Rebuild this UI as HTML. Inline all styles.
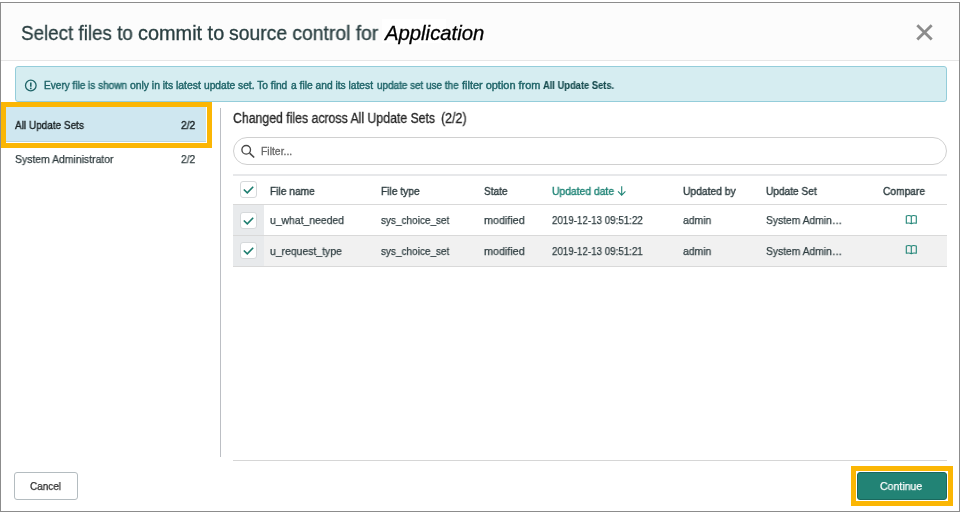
<!DOCTYPE html>
<html lang="en">
<head>
<meta charset="utf-8">
<title>Select files to commit to source control</title>
<style>
html,body{margin:0;padding:0;}
body{width:960px;height:512px;position:relative;overflow:hidden;background:#fff;font-family:"Liberation Sans",sans-serif;}
.a{position:absolute;box-sizing:border-box;}
.t{will-change:transform;position:absolute;white-space:nowrap;line-height:20px;height:20px;transform-origin:0 0;font-family:"Liberation Sans",sans-serif;}
svg{position:absolute;overflow:visible;}
</style>
</head>
<body>
<!-- outer frame -->
<div class="a" style="left:0;top:2px;width:960px;height:510px;border:1px solid #8c8c8c;"></div>
<!-- header -->
<div class="a" style="left:1px;top:3px;width:958px;height:58px;background:#fcfcfc;border-bottom:1px solid #e6e6e6;"></div>
<div class="a" style="left:382px;top:19px;width:64px;height:24px;background:#fff;"></div>
<!-- close X -->
<svg style="left:916px;top:24px" width="17" height="17" viewBox="0 0 17 17"><path d="M1.3 1.2 L15.7 15.6 M15.7 1.2 L1.3 15.6" stroke="#8c8c8c" stroke-width="2.8" fill="none"/></svg>
<!-- banner -->
<div class="a" style="left:15px;top:66px;width:932px;height:36px;background:#d6edf1;border:1px solid #94cdda;border-radius:3px;"></div>
<svg style="left:24px;top:79px" width="14" height="14" viewBox="0 0 14 14"><circle cx="6.8" cy="6.5" r="5.3" fill="none" stroke="#1f6468" stroke-width="1.3"/><path d="M6.8 3.5 V7.7" stroke="#1f6468" stroke-width="1.6" fill="none"/><circle cx="6.8" cy="9.4" r="0.9" fill="#1f6468"/></svg>
<!-- sidebar selected + orange highlight -->
<div class="a" style="left:1px;top:102px;width:211px;height:46px;border:5px solid #fbb604;background:#fff;"></div>
<div class="a" style="left:6px;top:107px;width:200px;height:35px;background:#cfe7f0;border-bottom:1px solid #b9d3dc;"></div>
<!-- vertical divider -->
<div class="a" style="left:220px;top:108px;width:1px;height:349px;background:#bcbfc4;"></div>
<!-- filter -->
<div class="a" style="left:233px;top:137px;width:714px;height:28px;border:1px solid #d0d0d0;border-radius:14px;background:#fff;"></div>
<svg style="left:240px;top:144px" width="16" height="16" viewBox="0 0 16 16"><circle cx="6.2" cy="5.8" r="4.3" fill="none" stroke="#484848" stroke-width="1.35"/><path d="M9.6 9.1 L14.2 13.5" stroke="#484848" stroke-width="1.6" fill="none"/></svg>
<!-- table -->
<div class="a" style="left:233px;top:174px;width:714px;height:2px;background:#e7e8ea;"></div>
<div class="a" style="left:233px;top:204px;width:714px;height:1px;background:#d9d9d9;"></div>
<div class="a" style="left:233px;top:205px;width:31px;height:30px;background:#e8eaec;"></div>
<div class="a" style="left:233px;top:235px;width:714px;height:1px;background:#d9d9d9;"></div>
<div class="a" style="left:233px;top:236px;width:714px;height:30px;background:#f1f1f1;"></div>
<div class="a" style="left:233px;top:236px;width:31px;height:30px;background:#e8eaec;"></div>
<div class="a" style="left:233px;top:265.5px;width:714px;height:1px;background:#d9d9d9;"></div>
<!-- checkboxes -->
<div class="a cb" style="left:240px;top:181px;width:17px;height:17px;background:#fff;border:1px solid #d6d9db;border-radius:3px;"></div>
<div class="a cb" style="left:240px;top:212px;width:17px;height:17px;background:#fff;border:1px solid #d6d9db;border-radius:3px;"></div>
<div class="a cb" style="left:240px;top:242px;width:17px;height:17px;background:#fff;border:1px solid #d6d9db;border-radius:3px;"></div>
<svg style="left:240px;top:181px" width="17" height="17" viewBox="0 0 17 17"><path d="M3.8 8.5 L7.3 11.9 L13.2 5.8" stroke="#1c7d6f" stroke-width="1.6" fill="none"/></svg>
<svg style="left:240px;top:212px" width="17" height="17" viewBox="0 0 17 17"><path d="M3.8 8.5 L7.3 11.9 L13.2 5.8" stroke="#1c7d6f" stroke-width="1.6" fill="none"/></svg>
<svg style="left:240px;top:242px" width="17" height="17" viewBox="0 0 17 17"><path d="M3.8 8.5 L7.3 11.9 L13.2 5.8" stroke="#1c7d6f" stroke-width="1.6" fill="none"/></svg>
<!-- sort arrow -->
<svg style="left:617px;top:186px" width="10" height="10" viewBox="0 0 10 10"><path d="M4.7 0.3 V9 M1 5.4 L4.7 9.1 L8.4 5.4" stroke="#218577" stroke-width="1.1" fill="none"/></svg>
<!-- book icons -->
<svg style="left:905px;top:214px" width="13" height="11" viewBox="0 0 13 11"><path d="M6.3 2.3 C5.3 1.5 2.6 1.5 1.3 2 V9.3 C2.8 9 5 9 6.3 9.7 C7.6 9 9.8 9 11.3 9.3 V2 C10 1.5 7.3 1.5 6.3 2.3 Z M6.3 2.3 V9.7" stroke="#218577" stroke-width="1.1" fill="none" stroke-linejoin="round"/></svg>
<svg style="left:905px;top:244px" width="13" height="11" viewBox="0 0 13 11"><path d="M6.3 2.3 C5.3 1.5 2.6 1.5 1.3 2 V9.3 C2.8 9 5 9 6.3 9.7 C7.6 9 9.8 9 11.3 9.3 V2 C10 1.5 7.3 1.5 6.3 2.3 Z M6.3 2.3 V9.7" stroke="#218577" stroke-width="1.1" fill="none" stroke-linejoin="round"/></svg>
<!-- footer line -->
<div class="a" style="left:233px;top:460px;width:714px;height:1px;background:#d6d6d6;"></div>
<!-- cancel -->
<div class="a" style="left:14px;top:472px;width:64px;height:28px;border:1px solid #b4bcc0;border-radius:3px;background:#fff;"></div>
<!-- continue -->
<div class="a" style="left:851px;top:466px;width:102px;height:40px;border:5px solid #fbb604;background:#fff;"></div>
<div class="a" style="left:857px;top:472px;width:90px;height:28px;border:1px solid #1a685d;border-radius:3px;background:#228375;"></div>
<span class="t" style="left:20.60px;top:22.78px;font-size:19.4px;color:#293e40;font-weight:400;font-style:normal;-webkit-text-stroke:0.3px #293e40;transform:scaleX(0.9694)">Select files to</span>
<span class="t" style="left:137.50px;top:22.78px;font-size:19.4px;color:#293e40;font-weight:400;font-style:normal;-webkit-text-stroke:0.3px #293e40;transform:scaleX(1.0256)">commit to</span>
<span class="t" style="left:229.20px;top:22.78px;font-size:19.4px;color:#293e40;font-weight:400;font-style:normal;-webkit-text-stroke:0.3px #293e40;transform:scaleX(0.9966)">source control for</span>
<span class="t" style="left:385.40px;top:22.64px;font-size:19.8px;color:#000;font-weight:400;font-style:italic;-webkit-text-stroke:0.3px #000;transform:scaleX(1.0260)">Application</span>
<span class="t" style="left:43.70px;top:76.00px;font-size:10.1px;color:#1f6468;font-weight:400;font-style:normal;-webkit-text-stroke:0.4px #1f6468;transform:scaleX(0.9929)">Every file is shown</span>
<span class="t" style="left:130.00px;top:76.00px;font-size:10.1px;color:#1f6468;font-weight:400;font-style:normal;-webkit-text-stroke:0.4px #1f6468;transform:scaleX(1.0259)">only in its latest</span>
<span class="t" style="left:204.20px;top:76.00px;font-size:10.1px;color:#1f6468;font-weight:400;font-style:normal;-webkit-text-stroke:0.4px #1f6468;transform:scaleX(1.0120)">update set. To find</span>
<span class="t" style="left:291.30px;top:76.00px;font-size:10.1px;color:#1f6468;font-weight:400;font-style:normal;-webkit-text-stroke:0.4px #1f6468;transform:scaleX(1.0149)">a file and its latest</span>
<span class="t" style="left:376.70px;top:76.00px;font-size:10.1px;color:#1f6468;font-weight:400;font-style:normal;-webkit-text-stroke:0.4px #1f6468;transform:scaleX(0.9824)">update set use the</span>
<span class="t" style="left:461.60px;top:76.00px;font-size:10.1px;color:#1f6468;font-weight:400;font-style:normal;-webkit-text-stroke:0.4px #1f6468;transform:scaleX(1.0832)">filter option from</span>
<span class="t" style="left:543.30px;top:76.00px;font-size:10.1px;color:#154a4d;font-weight:700;font-style:normal;-webkit-text-stroke:0.1px #154a4d;transform:scaleX(0.9253)">All Update Sets.</span>
<span class="t" style="left:15.40px;top:114.85px;font-size:11.1px;color:#1a2224;font-weight:400;font-style:normal;-webkit-text-stroke:0.4px #1a2224;transform:scaleX(0.9010)">All Update Sets</span>
<span class="t" style="left:181.00px;top:114.85px;font-size:11.1px;color:#1a2224;font-weight:400;font-style:normal;-webkit-text-stroke:0.4px #1a2224;transform:scaleX(0.9208)">2/2</span>
<span class="t" style="left:15.40px;top:149.15px;font-size:11.1px;color:#2e3b3e;font-weight:400;font-style:normal;-webkit-text-stroke:0.25px #2e3b3e;transform:scaleX(0.9398)">System Administrator</span>
<span class="t" style="left:181.00px;top:149.15px;font-size:11.1px;color:#2e3b3e;font-weight:400;font-style:normal;-webkit-text-stroke:0.25px #2e3b3e;transform:scaleX(0.9208)">2/2</span>
<span class="t" style="left:233.30px;top:108.72px;font-size:13.8px;color:#262626;font-weight:400;font-style:normal;-webkit-text-stroke:0.3px #262626;transform:scaleX(0.8902)">Changed files across All Update Sets</span>
<span class="t" style="left:441.10px;top:108.72px;font-size:13.8px;color:#262626;font-weight:400;font-style:normal;-webkit-text-stroke:0.3px #262626;transform:scaleX(0.9022)">(2/2)</span>
<span class="t" style="left:261.30px;top:142.10px;font-size:10.4px;color:#6a6a6a;font-weight:400;font-style:normal;-webkit-text-stroke:0.3px #6a6a6a;transform:scaleX(1.0004)">Filter...</span>
<span class="t" style="left:270.40px;top:180.85px;font-size:11.1px;color:#2e3d40;font-weight:400;font-style:normal;-webkit-text-stroke:0.4px #2e3d40;transform:scaleX(0.9196)">File name</span>
<span class="t" style="left:381.30px;top:180.85px;font-size:11.1px;color:#2e3d40;font-weight:400;font-style:normal;-webkit-text-stroke:0.4px #2e3d40;transform:scaleX(0.9228)">File type</span>
<span class="t" style="left:483.50px;top:180.85px;font-size:11.1px;color:#2e3d40;font-weight:400;font-style:normal;-webkit-text-stroke:0.4px #2e3d40;transform:scaleX(0.9071)">State</span>
<span class="t" style="left:551.70px;top:180.85px;font-size:11.1px;color:#218577;font-weight:400;font-style:normal;-webkit-text-stroke:0.4px #218577;transform:scaleX(0.9313)">Updated date</span>
<span class="t" style="left:682.90px;top:180.85px;font-size:11.1px;color:#2e3d40;font-weight:400;font-style:normal;-webkit-text-stroke:0.4px #2e3d40;transform:scaleX(0.9286)">Updated by</span>
<span class="t" style="left:765.80px;top:180.85px;font-size:11.1px;color:#2e3d40;font-weight:400;font-style:normal;-webkit-text-stroke:0.4px #2e3d40;transform:scaleX(0.9133)">Update Set</span>
<span class="t" style="left:883.10px;top:180.85px;font-size:11.1px;color:#2e3d40;font-weight:400;font-style:normal;-webkit-text-stroke:0.4px #2e3d40;transform:scaleX(0.9202)">Compare</span>
<span class="t" style="left:270.40px;top:210.15px;font-size:11.1px;color:#2e3d40;font-weight:400;font-style:normal;-webkit-text-stroke:0.25px #2e3d40;transform:scaleX(0.9371)">u_what_needed</span>
<span class="t" style="left:381.30px;top:210.15px;font-size:11.1px;color:#2e3d40;font-weight:400;font-style:normal;-webkit-text-stroke:0.25px #2e3d40;transform:scaleX(0.9004)">sys_choice_set</span>
<span class="t" style="left:483.50px;top:210.15px;font-size:11.1px;color:#2e3d40;font-weight:400;font-style:normal;-webkit-text-stroke:0.25px #2e3d40;transform:scaleX(0.9705)">modified</span>
<span class="t" style="left:551.70px;top:210.15px;font-size:11.1px;color:#2e3d40;font-weight:400;font-style:normal;-webkit-text-stroke:0.25px #2e3d40;transform:scaleX(0.8814)">2019-12-13 09:51:22</span>
<span class="t" style="left:682.90px;top:210.15px;font-size:11.1px;color:#2e3d40;font-weight:400;font-style:normal;-webkit-text-stroke:0.25px #2e3d40;transform:scaleX(0.9382)">admin</span>
<span class="t" style="left:765.80px;top:210.15px;font-size:11.1px;color:#2e3d40;font-weight:400;font-style:normal;-webkit-text-stroke:0.25px #2e3d40;transform:scaleX(0.9280)">System Admin…</span>
<span class="t" style="left:270.40px;top:240.55px;font-size:11.1px;color:#2e3d40;font-weight:400;font-style:normal;-webkit-text-stroke:0.25px #2e3d40;transform:scaleX(0.9401)">u_request_type</span>
<span class="t" style="left:381.30px;top:240.55px;font-size:11.1px;color:#2e3d40;font-weight:400;font-style:normal;-webkit-text-stroke:0.25px #2e3d40;transform:scaleX(0.9004)">sys_choice_set</span>
<span class="t" style="left:483.50px;top:240.55px;font-size:11.1px;color:#2e3d40;font-weight:400;font-style:normal;-webkit-text-stroke:0.25px #2e3d40;transform:scaleX(0.9705)">modified</span>
<span class="t" style="left:551.70px;top:240.55px;font-size:11.1px;color:#2e3d40;font-weight:400;font-style:normal;-webkit-text-stroke:0.25px #2e3d40;transform:scaleX(0.8814)">2019-12-13 09:51:21</span>
<span class="t" style="left:682.90px;top:240.55px;font-size:11.1px;color:#2e3d40;font-weight:400;font-style:normal;-webkit-text-stroke:0.25px #2e3d40;transform:scaleX(0.9382)">admin</span>
<span class="t" style="left:765.80px;top:240.55px;font-size:11.1px;color:#2e3d40;font-weight:400;font-style:normal;-webkit-text-stroke:0.25px #2e3d40;transform:scaleX(0.9280)">System Admin…</span>
<span class="t" style="left:30.00px;top:475.75px;font-size:11.1px;color:#2a2a2a;font-weight:400;font-style:normal;-webkit-text-stroke:0.25px #2a2a2a;transform:scaleX(0.8973)">Cancel</span>
<span class="t" style="left:880.30px;top:475.75px;font-size:11.1px;color:#ffffff;font-weight:400;font-style:normal;-webkit-text-stroke:0.25px #ffffff;transform:scaleX(0.9500)">Continue</span>
</body>
</html>
